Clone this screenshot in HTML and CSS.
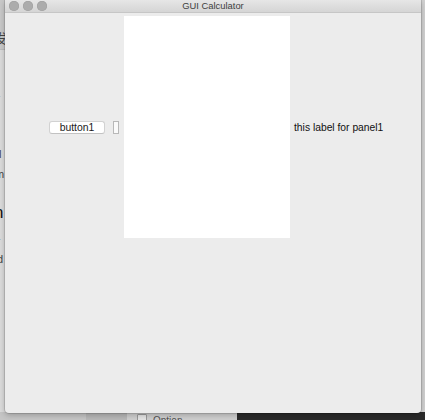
FILE: index.html
```html
<!DOCTYPE html>
<html>
<head>
<meta charset="utf-8">
<link rel="stylesheet" href="styles.css">
</head>
<body>
<div class="desktop">
  <div class="behind">
    <div class="behind-top"><span class="glyph g1">发</span></div>
    <div class="behind-body">
      <span class="glyph g2">-</span>
      <span class="glyph g3">el</span>
      <span class="glyph g4">m</span>
      <span class="glyph g5">n</span>
      <span class="glyph g6">-</span>
      <span class="glyph g7">d</span>
    </div>
  </div>
  <div class="bottom-strip">
    <div class="seg s1"></div>
    <div class="seg s2"></div>
    <div class="seg s3"><span class="check"></span><span class="opt">Option</span></div>
    <div class="seg s4"></div>
  </div>
  <div class="window">
    <div class="titlebar">
      <div class="lights">
        <span class="light"></span><span class="light"></span><span class="light"></span>
      </div>
      <div class="title">GUI Calculator</div>
    </div>
    <div class="content">
      <div class="row">
        <button class="btn">button1</button>
        <div class="field"></div>
        <div class="panel"></div>
        <div class="label">this label for panel1</div>
      </div>
    </div>
  </div>
</div>
</body>
</html>
```
FILE: styles.css
```css
* { box-sizing: border-box; }
html, body { margin: 0; padding: 0; }
body { width: 425px; height: 420px; overflow: hidden; font-family: "Liberation Sans", Arial, sans-serif; }

.desktop {
  position: relative;
  width: 425px;
  height: 420px;
  background: #d2d2d2;
  overflow: hidden;
}

.behind {
  position: absolute;
  left: 0; top: 0;
  width: 120px; height: 413px;
  display: flex;
  flex-direction: column;
}
.behind-top {
  height: 50px;
  background: #c9c9c9;
  border-bottom: 1px solid #bdbdbd;
  position: relative;
}
.behind-body {
  flex: 1;
  background: #dcdcdc;
  position: relative;
}
.glyph {
  position: absolute;
  color: #333;
  font-size: 11px;
  line-height: 1;
}
.g1 { left: -6px; top: 31px; font-size: 13px; font-family: "Noto Sans CJK SC", sans-serif; color: #444; }
.g2 { left: -3px; top: 40px; color: #aaa; }
.g3 { left: -7px; top: 99px; color: #444; }
.g4 { left: -5px; top: 119px; color: #444; }
.g5 { left: -6px; top: 154px; font-size: 17px; color: #111; }
.g6 { left: -3px; top: 183px; color: #777; }
.g7 { left: -3px; top: 204px; color: #444; }

.bottom-strip {
  position: absolute;
  left: 0; bottom: 0;
  width: 425px; height: 8px;
  display: flex;
}
.seg { height: 100%; }
.s1 { width: 86px; background: #c6c6c6; }
.s2 { width: 41px; background: #b9b9b9; }
.s3 { width: 110px; background: #d0d0d0; display: flex; align-items: flex-start; padding-left: 10px; gap: 6px; overflow: hidden; }
.s4 { flex: 1; background: #2a2a2a; }
.check { width: 10px; height: 9px; margin-top: 2px; border: 1px solid #9a9a9a; background: #e6e6e6; border-radius: 1px; }
.opt { font-size: 10px; color: #555; line-height: 1; margin-top: 4px; }

.window {
  position: absolute;
  left: 5px; top: 0;
  width: 416px; height: 413px;
  background: #ececec;
  border-radius: 0 0 4px 4px;
  box-shadow: 0 0 0 1px rgba(0,0,0,0.12), 0 2px 6px rgba(0,0,0,0.25);
  display: flex;
  flex-direction: column;
  overflow: hidden;
}

.titlebar {
  height: 13px;
  flex: none;
  background: linear-gradient(#e6e6e6, #d5d5d5);
  border-bottom: 1px solid #c6c6c6;
  display: flex;
  align-items: center;
  position: relative;
}
.lights {
  display: flex;
  gap: 4px;
  padding-left: 4px;
  padding-bottom: 1px;
}
.light {
  width: 10px; height: 10px;
  border-radius: 50%;
  background: #acacac;
  box-shadow: inset 0 0 0 0.5px #9e9e9e;
}
.title {
  position: absolute;
  left: 0; right: 0; top: 0;
  text-align: center;
  font-size: 9.4px;
  line-height: 12px;
  color: #3f3f3f;
}

.content {
  flex: 1;
  padding-top: 3px;
}
.row {
  display: flex;
  align-items: center;
  padding-left: 44px;
}
.btn {
  width: 56px;
  height: 13px;
  margin: 0;
  padding: 0;
  background: #ffffff;
  border: 1px solid #d2d2d2;
  border-bottom-color: #c2c2c2;
  border-radius: 3px;
  font-family: "Liberation Sans", Arial, sans-serif;
  font-size: 10.4px;
  line-height: 11px;
  color: #1a1a1a;
  text-align: center;
}
.field {
  width: 6px;
  height: 13px;
  margin-left: 8px;
  background: #fafafa;
  border: 1px solid #b8b8b8;
}
.panel {
  width: 166px;
  height: 222px;
  margin-left: 5px;
  background: #ffffff;
}
.label {
  margin-left: 4px;
  font-size: 10.3px;
  color: #111;
  line-height: 12px;
  padding-top: 2px;
}
```
